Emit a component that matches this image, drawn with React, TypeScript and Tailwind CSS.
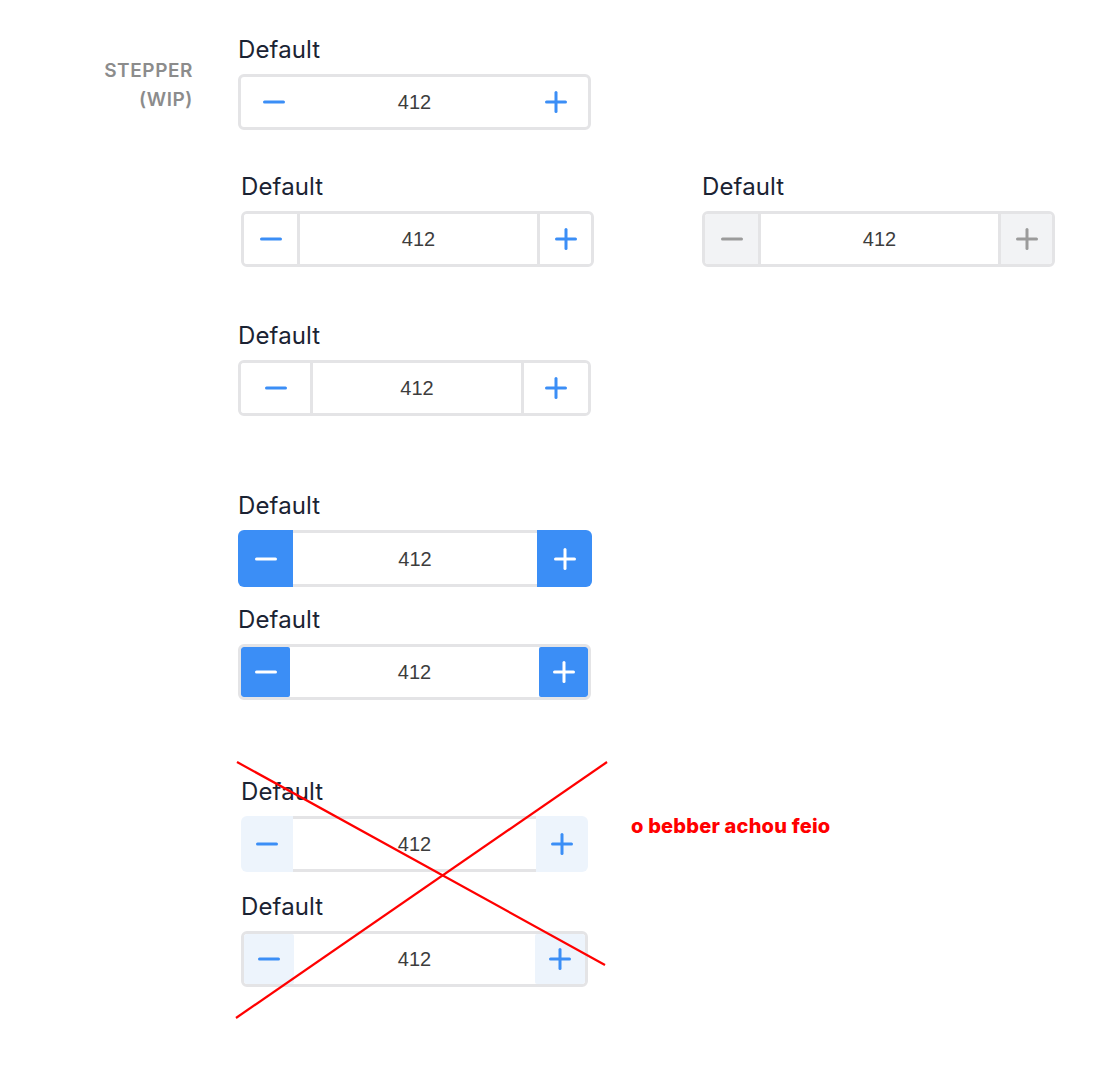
import React from "react";

const BLUE = "#3b8ef6";

function Minus({ color }: { color: string }) {
  return (
    <svg width="22" height="22" viewBox="0 0 22 22" fill="none">
      <line x1="1.5" y1="11" x2="20.5" y2="11" stroke={color} strokeWidth="3" strokeLinecap="round" />
    </svg>
  );
}

function Plus({ color }: { color: string }) {
  return (
    <svg width="22" height="22" viewBox="0 0 22 22" fill="none">
      <line x1="1.5" y1="11" x2="20.5" y2="11" stroke={color} strokeWidth="3" strokeLinecap="round" />
      <line x1="11" y1="1.5" x2="11" y2="20.5" stroke={color} strokeWidth="3" strokeLinecap="round" />
    </svg>
  );
}

function Value() {
  return (
    <div className="flex-1 flex items-center justify-center text-[20px] text-[#3d3d3d] [font-family:'Liberation_Sans',Arial,sans-serif]">
      412
    </div>
  );
}

function Label() {
  return (
    <div className="h-[28px] mb-[10px] leading-[28px] text-[24px] tracking-[0.005em] text-[#1b2333] [font-family:Inter,sans-serif]">
      Default
    </div>
  );
}

/* Variant A: single box, no dividers */
function StepperA() {
  return (
    <div className="flex h-[56px] w-[353px] rounded-[6px] border-[3px] border-[#e4e4e6] bg-white">
      <div className="w-[65px] flex items-center justify-center"><Minus color={BLUE} /></div>
      <Value />
      <div className="w-[65px] flex items-center justify-center"><Plus color={BLUE} /></div>
    </div>
  );
}

/* Variant B: dividers */
function StepperB({ muted = false, left = 53, right = 53 }: { muted?: boolean; left?: number; right?: number }) {
  const bg = muted ? "bg-[#f2f3f5]" : "bg-white";
  const c = muted ? "#9b9b9b" : BLUE;
  return (
    <div className="flex h-[56px] w-[353px] rounded-[6px] border-[3px] border-[#e4e4e6] bg-white overflow-hidden">
      <div className={`${bg} border-r-[3px] border-[#e4e4e6] flex items-center justify-center`} style={{ width: left + 3 }}>
        <Minus color={c} />
      </div>
      <Value />
      <div className={`${bg} border-l-[3px] border-[#e4e4e6] flex items-center justify-center`} style={{ width: right + 3 }}>
        <Plus color={c} />
      </div>
    </div>
  );
}

/* Filled side buttons, middle with top/bottom borders */
function StepperOpen({ tone }: { tone: "blue" | "light" }) {
  const btn = tone === "blue" ? "bg-[#3b8ef6]" : "bg-[#edf4fc]";
  const c = tone === "blue" ? "#ffffff" : BLUE;
  const w = tone === "blue" ? "w-[354px] h-[57px]" : "w-[347px] h-[56px]";
  const bw = tone === "blue" ? "w-[55px]" : "w-[52px]";
  return (
    <div className={`flex ${w} rounded-[6px] overflow-hidden`}>
      <div className={`${bw} ${btn} flex items-center justify-center`}><Minus color={c} /></div>
      <div className="flex-1 flex border-y-[3px] border-[#e4e4e6] bg-white"><Value /></div>
      <div className={`${bw} ${btn} flex items-center justify-center`}><Plus color={c} /></div>
    </div>
  );
}

/* Outer border, filled buttons inside */
function StepperInset({ tone }: { tone: "blue" | "light" }) {
  const btn = tone === "blue" ? "bg-[#3b8ef6]" : "bg-[#edf4fc]";
  const c = tone === "blue" ? "#ffffff" : BLUE;
  const w = tone === "blue" ? "w-[353px] h-[56px]" : "w-[347px] h-[56px]";
  const bw = tone === "blue" ? "w-[49px]" : "w-[50px]";
  return (
    <div className={`flex ${w} rounded-[6px] border-[3px] border-[#e4e4e6] bg-white overflow-hidden`}>
      <div className={`${bw} ${btn} rounded-[2px] flex items-center justify-center`}><Minus color={c} /></div>
      <Value />
      <div className={`${bw} ${btn} rounded-[2px] flex items-center justify-center`}><Plus color={c} /></div>
    </div>
  );
}

export default function App() {
  return (
    <div className="relative w-[1120px] h-[1078px] bg-white flex [font-family:Inter,sans-serif]">
      <div className="w-[193px] shrink-0 pt-[56px] text-right text-[19px] leading-[29px] font-semibold tracking-[0.03em] text-[#8c8c8c] uppercase">
        <div>Stepper</div>
        <div>(WIP)</div>
      </div>

      <div className="ml-[45px] pt-[36px] flex flex-col">
        <div>
          <Label />
          <StepperA />
        </div>

        <div className="mt-[43px] ml-[3px] flex gap-[108px]">
          <div>
            <Label />
            <StepperB left={53} right={51} />
          </div>
          <div>
            <Label />
            <StepperB muted left={53} right={51} />
          </div>
        </div>

        <div className="mt-[55px]">
          <Label />
          <StepperB left={69} right={64} />
        </div>

        <div className="mt-[76px]">
          <Label />
          <StepperOpen tone="blue" />
        </div>

        <div className="mt-[19px]">
          <Label />
          <StepperInset tone="blue" />
        </div>

        <div className="mt-[78px] ml-[3px] flex items-start">
          <div>
            <Label />
            <StepperOpen tone="light" />
          </div>
          <div className="ml-[43px] mt-[36px] text-[20px] leading-[24px] font-extrabold tracking-[0.01em] text-[#ff0000]">
            o bebber achou feio
          </div>
        </div>

        <div className="mt-[21px] ml-[3px]">
          <Label />
          <StepperInset tone="light" />
        </div>
      </div>

      <svg className="absolute left-0 top-0 pointer-events-none" width="1120" height="1078" viewBox="0 0 1120 1078">
        <line x1="237" y1="762" x2="605" y2="965" stroke="#ff0000" strokeWidth="2.2" />
        <line x1="607" y1="762" x2="236" y2="1018" stroke="#ff0000" strokeWidth="2.2" />
      </svg>
    </div>
  );
}
